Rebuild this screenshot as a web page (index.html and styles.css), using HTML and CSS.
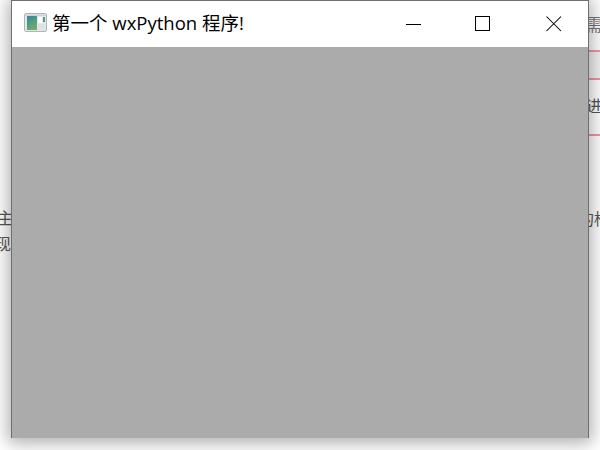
FILE: index.html
```html
<!DOCTYPE html>
<html lang="zh-CN">
<head>
<meta charset="utf-8">
<title>第一个 wxPython 程序!</title>
<link rel="stylesheet" href="styles.css">
</head>
<body>
<div class="backdrop">
  <div class="cell"></div>
  <div class="rule rule-a"></div>
  <div class="rule rule-b"></div>
  <div class="rule rule-c"></div>
  <span class="frag frag-xu">需</span>
  <span class="frag frag-jin">进</span>
  <span class="frag frag-zhu">主</span>
  <span class="frag frag-xian">现</span>
  <span class="frag frag-ji">的框</span>
</div>
<main class="window">
  <header class="titlebar">
    <svg class="app-icon" width="23" height="19" viewBox="0 0 23 19" aria-hidden="true">
      <defs>
        <linearGradient id="pane" x1="0" y1="0" x2="0.5" y2="1">
          <stop offset="0" stop-color="#2b8a9e"/>
          <stop offset="1" stop-color="#74a96c"/>
        </linearGradient>
      </defs>
      <rect x="0.5" y="0.5" width="22" height="18" rx="1.500" fill="#e4e7ea" stroke="#b0b5ba"/>
      <rect x="1.500" y="1.500" width="20" height="1.500" fill="#cfd4d9"/>
      <rect x="3" y="3" width="10" height="14" fill="url(#pane)"/>
      <rect x="14" y="4" width="4" height="6" fill="#fdfdfd"/>
      <rect x="19" y="4" width="2" height="5" fill="#4f9a8c"/>
      <rect x="14" y="11" width="7" height="6" fill="#dfe1e3"/>
    </svg>
    <h1 class="title">第一个 wxPython 程序!</h1>
    <div class="controls">
      <span class="control control-min">
        <svg width="16" height="16" viewBox="0 0 16 16" aria-hidden="true"><path d="M0 8.500H15" stroke="#000" fill="none"/></svg>
      </span>
      <span class="control control-max">
        <svg width="16" height="16" viewBox="0 0 16 16" aria-hidden="true"><rect x="0.500" y="0.500" width="14" height="14" stroke="#000" fill="none"/></svg>
      </span>
      <span class="control control-close">
        <svg width="16" height="16" viewBox="0 0 16 16" aria-hidden="true"><path d="M0.500 0.500L15 15M15 0.500L0.500 15" stroke="#000" stroke-width="1.050" fill="none"/></svg>
      </span>
    </div>
  </header>
  <section class="client"></section>
</main>
</body>
</html>
```
FILE: styles.css
```css
html, body {
  margin: 0;
  padding: 0;
  height: 100%;
  overflow: hidden;
  background: #fff;
}

.backdrop {
  position: absolute;
  inset: 0;
  overflow: hidden;
  font-family: "Noto Sans CJK SC", sans-serif;
  font-size: 16px;
  color: #555;
}

.rule {
  position: absolute;
  left: 589px;
  width: 11px;
  height: 2px;
  background-color: #ec98a3;
}
.rule-a { top: 50px; }
.rule-b { top: 78px; }
.rule-c { top: 134px; }

.cell {
  position: absolute;
  left: 589px;
  right: 0;
  top: 52px;
  height: 27px;
  background: #f2f2f2;
}

.frag {
  position: absolute;
  line-height: 20px;
  white-space: nowrap;
}
.frag-xu { left: 586px; top: 14px; color: #777; }
.frag-jin { left: 586px; top: 95px; }
.frag-zhu { left: -3px; top: 207px; }
.frag-xian { left: -5px; top: 233px; }
.frag-ji { left: 578px; top: 208px; }

.window {
  position: absolute;
  left: 11px;
  top: 0;
  width: 576px;
  height: 437px;
  display: flex;
  flex-direction: column;
  border: 1px solid #6f6f6f;
  border-bottom: 0;
  box-shadow: 0 2px 16px 3px rgba(0, 0, 0, 0.32);
}

.titlebar {
  flex: 0 0 46px;
  display: flex;
  align-items: center;
  background: #fff;
  padding-left: 12px;
}

.app-icon {
  flex: none;
  margin-right: 5px;
  margin-bottom: 3px;
}

.title {
  flex: 1;
  margin: 0 0 2px;
  font-family: "Open Sans", "Noto Sans CJK SC", sans-serif;
  font-size: 18.5px;
  font-weight: 400;
  line-height: 44px;
  color: #000;
  white-space: nowrap;
}

.controls {
  display: flex;
}

.control {
  height: 46px;
  display: flex;
  align-items: center;
  justify-content: center;
}
.control-min { width: 64px; }
.control-max { width: 74px; }
.control-close { width: 68px; }

.client {
  flex: 1;
  background: #ababab;
}
```
